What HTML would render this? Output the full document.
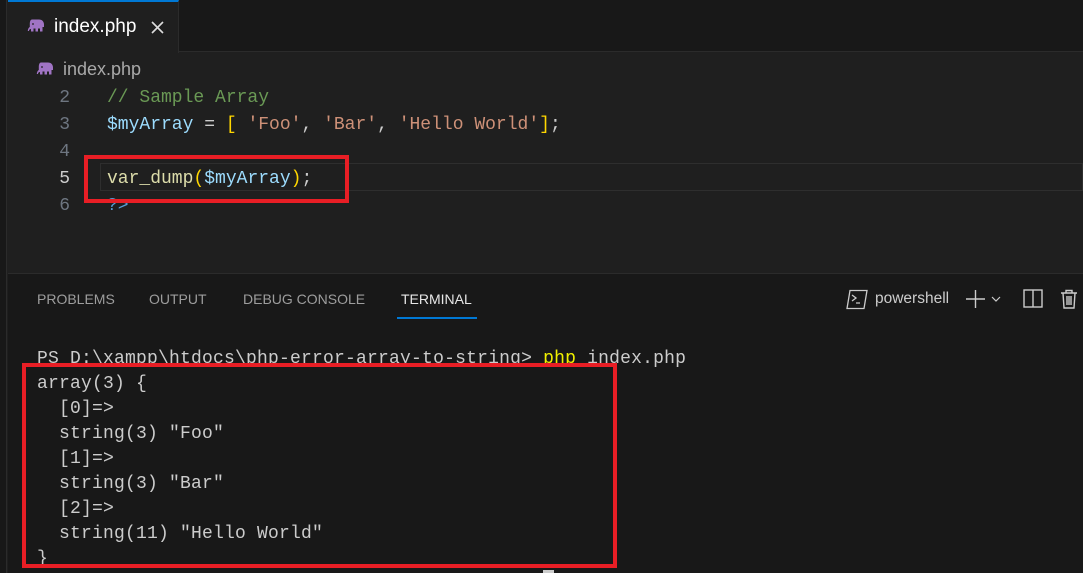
<!DOCTYPE html>
<html><head><meta charset="utf-8"><style>
*{margin:0;padding:0;box-sizing:border-box}
body{width:1083px;height:573px;overflow:hidden;background:#1f1f1f;position:relative;font-family:"Liberation Sans",sans-serif}
.abs{position:absolute}
.mono{font-family:"Liberation Mono",monospace;font-size:18px;white-space:pre}
</style></head><body>
<div class="abs" style="left:0;top:0;width:7px;height:573px;background:#181818;border-right:1px solid #2b2b2b"></div>
<div class="abs" style="left:8px;top:0;width:1075px;height:52px;background:#181818;border-bottom:1px solid #2b2b2b"></div>
<div class="abs" style="left:8px;top:0;width:171px;height:53px;background:#1f1f1f;border-top:2px solid #0078d4;border-right:1px solid #2b2b2b"></div>
<svg class="abs" style="left:27px;top:18px" width="18" height="15" viewBox="0 0 18 15"><path d="M5 1.5h7c3 0 5 2 5 5v2.5h-1.5v4.5h-2.5v-3h-2v3H8.5v-3h-2v3H4V11c-1 0-2 .5-2 2H.8c0-2 1-3.5 2-4V6C2.8 3.5 3.5 1.5 5 1.5z" fill="#a074c4"/><circle cx="6" cy="6" r=".9" fill="#1f1f1f"/></svg>
<div class="abs" style="left:54px;top:16px;color:#fff;font-size:19px">index.php</div>
<svg class="abs" style="left:151px;top:21px" width="13" height="13" viewBox="0 0 13 13"><path d="M1 1L12 12M12 1L1 12" stroke="#ddd" stroke-width="1.6"/></svg>
<svg class="abs" style="left:36px;top:61px" width="18" height="15" viewBox="0 0 18 15"><path d="M5 1.5h7c3 0 5 2 5 5v2.5h-1.5v4.5h-2.5v-3h-2v3H8.5v-3h-2v3H4V11c-1 0-2 .5-2 2H.8c0-2 1-3.5 2-4V6C2.8 3.5 3.5 1.5 5 1.5z" fill="#a074c4"/><circle cx="6" cy="6" r=".9" fill="#1f1f1f"/></svg>
<div class="abs" style="left:63px;top:59px;color:#a9a9a9;font-size:18px">index.php</div>
<div class="abs" style="left:100px;top:163px;width:983px;height:28px;border:1px solid #2e2e2e"></div>
<div class="abs mono" style="left:40px;top:85px;line-height:27px;color:#6e7681;text-align:right;width:30px">2
3
4
<span style="color:#ccc">5</span>
6</div>
<div class="abs mono" style="left:107px;top:85px;line-height:27px;color:#ccc"><span style="color:#6a9955">// Sample Array</span>
<span style="color:#9cdcfe">$myArray</span> = <span style="color:#ffd700">[</span> <span style="color:#ce9178">'Foo'</span>, <span style="color:#ce9178">'Bar'</span>, <span style="color:#ce9178">'Hello World'</span><span style="color:#ffd700">]</span>;

<span style="color:#dcdcaa">var_dump</span><span style="color:#ffd700">(</span><span style="color:#9cdcfe">$myArray</span><span style="color:#ffd700">)</span>;
<span style="color:#569cd6">?&gt;</span></div>
<div class="abs" style="left:84px;top:155px;width:265px;height:48px;border:4px solid #e81e25"></div>
<div class="abs" style="left:8px;top:273px;width:1075px;height:300px;background:#181818;border-top:1px solid #2b2b2b"></div>
<div class="abs" style="top:291px;left:37px;font-size:14px;color:#9d9d9d">PROBLEMS</div>
<div class="abs" style="top:291px;left:149px;font-size:14px;color:#9d9d9d">OUTPUT</div>
<div class="abs" style="top:291px;left:243px;font-size:14px;color:#9d9d9d">DEBUG CONSOLE</div>
<div class="abs" style="top:291px;left:401px;font-size:14px;color:#e7e7e7">TERMINAL</div>
<div class="abs" style="top:317px;left:397px;width:80px;height:2px;background:#0078d4"></div>
<svg class="abs" style="left:846px;top:289px" width="22" height="21" viewBox="0 0 22 21"><path d="M4 1.5h17l-3 18H1z" fill="none" stroke="#ccc" stroke-width="1.3"/><path d="M6 6l4 3-4 3M10 14h4" fill="none" stroke="#ccc" stroke-width="1.3"/></svg>
<div class="abs" style="left:875px;top:290px;font-size:15.5px;color:#ccc">powershell</div>
<svg class="abs" style="left:965px;top:289px" width="42" height="20" viewBox="0 0 42 20"><path d="M1 10h19M10.5 1v18" stroke="#ccc" stroke-width="1.4"/><path d="M27 8l4 4 4-4" fill="none" stroke="#ccc" stroke-width="1.2"/></svg>
<svg class="abs" style="left:1023px;top:289px" width="20" height="20" viewBox="0 0 20 20"><rect x="1" y="1" width="18" height="17" fill="none" stroke="#ccc" stroke-width="1.4"/><path d="M10 1v17" stroke="#ccc" stroke-width="1.4"/></svg>
<svg class="abs" style="left:1060px;top:289px" width="18" height="20" viewBox="0 0 18 20"><path d="M1 4h16M6 4V1.5h6V4M3 4l1 15h10l1-15M7 7v9M9 7v9M11 7v9" fill="none" stroke="#ccc" stroke-width="1.4"/></svg>
<div class="abs mono" style="left:37px;top:347px;line-height:25px;color:#ccc;letter-spacing:0.2px">PS D:\xampp\htdocs\php-error-array-to-string&gt; <span style="color:#f0f000">php</span> index.php
array(3) {
  [0]=&gt;
  string(3) "Foo"
  [1]=&gt;
  string(3) "Bar"
  [2]=&gt;
  string(11) "Hello World"
}</div>
<div class="abs" style="left:543px;top:570px;width:11px;height:3px;background:#ccc"></div>
<div class="abs" style="left:22px;top:363px;width:595px;height:205px;border:4px solid #e81e25"></div>
</body></html>
